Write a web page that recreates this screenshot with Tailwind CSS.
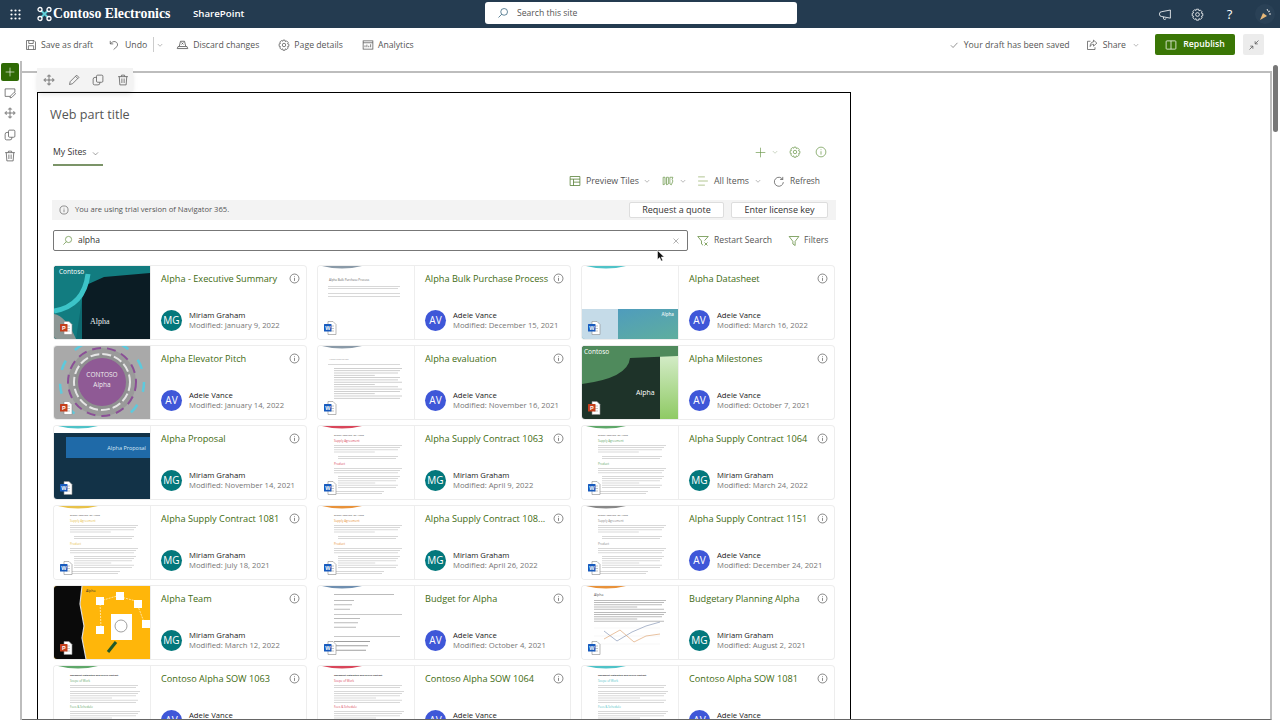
<!DOCTYPE html>
<html lang="en">
<head>
<meta charset="UTF-8">
<title>Contoso Electronics - SharePoint</title>
<script src="https://cdn.jsdelivr.net/npm/@tailwindcss/browser@4"></script>
</head>
<body class="h-[720px] w-[1280px] overflow-hidden bg-white font-['Open_Sans',sans-serif] text-[8.700px] text-[#444]">

<!-- icon sprite -->
<svg class="hidden">
  <defs>
    <symbol id="i-search" viewBox="0 0 16 16"><circle cx="9.500" cy="6.500" r="4.500"/><path d="M6.300 9.700 2 14"/></symbol>
    <symbol id="i-chev" viewBox="0 0 16 16"><path d="M3.500 6 8 10.500 12.500 6"/></symbol>
    <symbol id="i-save" viewBox="0 0 16 16"><path d="M2 2h10l2 2v10H2z"/><path d="M5 2v4h6V2M4.500 14V9h7v5"/></symbol>
    <symbol id="i-undo" viewBox="0 0 16 16"><path d="M3 2.500v4h4"/><path d="M3 6.500C5 4 7.500 3 9.500 3.500c3 .8 4.200 4 2.500 6.500L7.500 14"/></symbol>
    <symbol id="i-discard" viewBox="0 0 16 16"><path d="M1.500 13h13l-1-2.500h-1.500L10.500 4h-5L4 10.500H2.500z"/><path d="M4 10.500h8M6.800 5.500l2.400 2.400M9.200 5.500 6.800 7.900"/></symbol>
    <symbol id="i-gear" viewBox="0 0 16 16"><circle cx="8" cy="8" r="2.300"/><path d="M6.600 1.500h2.800l.4 2 1.800-.9 2 2-.9 1.800 1.800.5v2.800l-1.800.5.900 1.800-2 2-1.800-.9-.4 1.900H6.600l-.4-1.900-1.800.9-2-2 .9-1.800-1.800-.5V6.400l1.800-.5-.9-1.800 2-2 1.800.9z"/></symbol>
    <symbol id="i-chart" viewBox="0 0 16 16"><rect x="1.500" y="2.500" width="13" height="11"/><path d="M1.500 5h13M4 11V8.500M6.500 11V7.500M9 11V9M11.500 11V7"/></symbol>
    <symbol id="i-check" viewBox="0 0 16 16"><path d="M3 8.500 6.500 12 13.500 4.500"/></symbol>
    <symbol id="i-share" viewBox="0 0 16 16"><path d="M6 3H2v11h10v-3"/><path d="M14.500 5.500 10 1.500v2.300C7 4 5.500 6.500 5.500 10c1-2 2.500-3 4.500-3v2.500z"/></symbol>
    <symbol id="i-book" viewBox="0 0 16 16"><rect x="1.500" y="2.500" width="13" height="11" rx="1"/><path d="M8 2.500v11"/></symbol>
    <symbol id="i-collapse" viewBox="0 0 16 16"><path d="M14 2 9.500 6.500M9.500 3v3.500H13M2 14l4.500-4.500M3 9.500h3.500V13"/></symbol>
    <symbol id="i-megaphone" viewBox="0 0 16 16"><path d="M14 2.500v10L3.500 10.500a2.500 2.500 0 0 1 0-6z"/><path d="M5.500 11v1.500a1.500 1.500 0 0 0 3 .3"/></symbol>
    <symbol id="i-move" viewBox="0 0 16 16"><path d="M8 4v8M4 8h8M6 3l2-2 2 2zM6 13l2 2 2-2zM3 6 1 8l2 2zM13 6l2 2-2 2z"/></symbol>
    <symbol id="i-pencil" viewBox="0 0 16 16"><path d="M2 14l1-4L11.500 1.500l3 3L6 13z"/><path d="M10 3l3 3"/></symbol>
    <symbol id="i-copy" viewBox="0 0 16 16"><rect x="6" y="1.500" width="8.500" height="9.500" rx="1.500"/><path d="M6 4.500H4A2.500 2.500 0 0 0 1.500 7v5.500A2 2 0 0 0 3.500 14.500H8A2.500 2.500 0 0 0 10.500 12v-1"/></symbol>
    <symbol id="i-trash" viewBox="0 0 16 16"><path d="M1.500 3.500h13M5.500 3.500 6 1.500h4l.5 2M3 3.500l.8 11h8.400l.8-11M6.500 6v6M9.500 6v6"/></symbol>
    <symbol id="i-edit" viewBox="0 0 16 16"><path d="M8 12.500H1.500v-10h13V7"/><path d="M8 14.500l.6-2.400 5-5 1.800 1.800-5 5z"/></symbol>
    <symbol id="i-info" viewBox="0 0 16 16"><circle cx="8" cy="8" r="6.500"/><path d="M8 7v4.500M8 4.500v1"/></symbol>
    <symbol id="i-plus" viewBox="0 0 16 16"><path d="M8 1v14M1 8h14"/></symbol>
    <symbol id="i-table" viewBox="0 0 16 16"><path d="M1.500 2h13v12h-13zM1.500 5.500h13M6 5.500V14M6 9.500h8.500"/></symbol>
    <symbol id="i-board" viewBox="0 0 16 16"><path d="M1.500 3v10l2.500-1V3zM6 3v10l2.500-1V3zM10.500 3h4l-1 3 1 2-2 5-2-1z"/></symbol>
    <symbol id="i-list" viewBox="0 0 16 16"><path d="M1.500 2.500h9M1.500 8h13M1.500 13.500h9"/></symbol>
    <symbol id="i-refresh" viewBox="0 0 16 16"><path d="M13 2.500v3.500H9.500"/><path d="M13 6a6 6 0 1 0 .8 3.500"/></symbol>
    <symbol id="i-close" viewBox="0 0 16 16"><path d="M3 3l10 10M13 3 3 13"/></symbol>
    <symbol id="i-filter" viewBox="0 0 16 16"><path d="M1.500 2h13L9.500 8.500V14l-3-2V8.500z"/></symbol>
    <symbol id="i-filter-x" viewBox="0 0 16 16"><path d="M1 2h14L10 7.500M6 8 1 2M6 8v4l2 1.500"/><path d="M10 10l4 4M14 10l-4 4"/></symbol>
  </defs>
</svg>

<!-- suite bar -->
<header class="flex h-[28px] items-center bg-[#243b50] text-white">
  <div class="flex w-[485px] items-center whitespace-nowrap">
    <svg class="ml-[10px] h-[11px] w-[11px] fill-white" viewBox="0 0 11 11"><circle cx="1.500" cy="1.500" r="1.100"/><circle cx="5.500" cy="1.500" r="1.100"/><circle cx="9.500" cy="1.500" r="1.100"/><circle cx="1.500" cy="5.500" r="1.100"/><circle cx="5.500" cy="5.500" r="1.100"/><circle cx="9.500" cy="5.500" r="1.100"/><circle cx="1.500" cy="9.500" r="1.100"/><circle cx="5.500" cy="9.500" r="1.100"/><circle cx="9.500" cy="9.500" r="1.100"/></svg>
    <svg class="ml-[16px] h-[16px] w-[15px]" viewBox="0 0 15 16" fill="none" stroke-width="1.300">
      <path d="M4 4.500 11 11.500M11 4.500 4 11.500" stroke="#5fd0d8" stroke-width="2"/>
      <circle cx="3" cy="3.500" r="2" stroke="#fff"/><circle cx="12" cy="3.500" r="2" stroke="#fff"/><circle cx="3" cy="12.500" r="2" stroke="#fff"/><circle cx="12" cy="12.500" r="2" stroke="#fff"/>
    </svg>
    <span class="ml-[1px] w-[117px] font-['Liberation_Serif',serif] text-[13.800px] font-bold leading-none">Contoso Electronics</span>
    <span class="ml-[23px] text-[9.700px] font-semibold">SharePoint</span>
  </div>
  <div class="mb-[2px] flex h-[22px] w-[312px] items-center rounded-[3px] bg-white pl-[12px] text-[#555]">
    <svg class="h-[12px] w-[12px] fill-none stroke-[#2f5f7a]"><use href="#i-search"/></svg>
    <span class="ml-[8px] text-[8.600px]">Search this site</span>
  </div>
  <div class="ml-auto mr-[5px] flex items-center gap-[19px]">
    <svg class="h-[13px] w-[13px] fill-none stroke-white"><use href="#i-megaphone"/></svg>
    <svg class="h-[13px] w-[13px] fill-none stroke-white"><use href="#i-gear"/></svg>
    <span class="w-[13px] text-center text-[13px] leading-none">?</span>
    <div class="flex h-[20px] w-[20px] items-center justify-center rounded-full bg-[#2a4156]">
      <svg class="h-[14px] w-[14px]" viewBox="0 0 14 14"><path d="M2 13 5 6l4 3z" fill="#e8b878"/><path d="M9 2l1 2M12 4l-2 1M11 7h2" stroke="#dcdcdc" fill="none"/></svg>
    </div>
  </div>
</header>

<!-- command bar -->
<div class="flex h-[33px] items-center pl-[25px] text-[#555]">
  <svg class="h-[12px] w-[12px] fill-none stroke-[#555]"><use href="#i-save"/></svg>
  <span class="ml-[4px] pt-[2px]">Save as draft</span>
  <svg class="ml-[15px] h-[12px] w-[12px] fill-none stroke-[#555]"><use href="#i-undo"/></svg>
  <span class="ml-[5px] pt-[2px]">Undo</span>
  <span class="ml-[6px] h-[15px] w-px bg-[#ccc]"></span>
  <svg class="ml-[2px] h-[8px] w-[8px] fill-none stroke-[#777]"><use href="#i-chev"/></svg>
  <svg class="ml-[12px] h-[13px] w-[13px] fill-none stroke-[#555]"><use href="#i-discard"/></svg>
  <span class="ml-[4px] pt-[2px]">Discard changes</span>
  <svg class="ml-[19px] h-[12px] w-[12px] fill-none stroke-[#555]"><use href="#i-gear"/></svg>
  <span class="ml-[4px] pt-[2px]">Page details</span>
  <svg class="ml-[19px] h-[12px] w-[12px] fill-none stroke-[#555]"><use href="#i-chart"/></svg>
  <span class="ml-[4px] pt-[2px]">Analytics</span>

  <svg class="ml-auto h-[10px] w-[10px] fill-none stroke-[#555]"><use href="#i-check"/></svg>
  <span class="ml-[5px] pt-[2px]">Your draft has been saved</span>
  <svg class="ml-[16px] h-[12px] w-[12px] fill-none stroke-[#555]"><use href="#i-share"/></svg>
  <span class="ml-[5px] pt-[2px]">Share</span>
  <svg class="ml-[6px] h-[8px] w-[8px] fill-none stroke-[#777]"><use href="#i-chev"/></svg>
  <button class="ml-[15px] flex h-[21px] w-[80px] items-center justify-center gap-[6px] rounded-[2px] bg-[#3a7605] font-semibold text-white">
    <svg class="h-[12px] w-[12px] fill-none stroke-white"><use href="#i-book"/></svg>Republish
  </button>
  <button class="ml-[8px] mr-[16px] flex h-[21px] w-[21px] items-center justify-center rounded-[2px] bg-[#ececec]">
    <svg class="h-[12px] w-[12px] fill-none stroke-[#555]"><use href="#i-collapse"/></svg>
  </button>
</div>

<!-- page -->
<div class="relative flex h-[659px]">
  <!-- section toolbar -->
  <aside class="flex h-full w-[22px] flex-col items-center border-r-2 border-[#bdbdbd] pt-[2px]">
    <div class="flex h-[18px] w-[18px] items-center justify-center rounded-[2px] bg-[#2f6a05]">
      <svg class="h-[10px] w-[10px] fill-none stroke-white"><use href="#i-plus"/></svg>
    </div>
    <svg class="mt-[6px] h-[12px] w-[12px] fill-none stroke-[#555]"><use href="#i-edit"/></svg>
    <svg class="mt-[8px] h-[12px] w-[12px] fill-none stroke-[#555]"><use href="#i-move"/></svg>
    <svg class="mt-[10px] h-[12px] w-[12px] fill-none stroke-[#555]"><use href="#i-copy"/></svg>
    <svg class="mt-[9px] h-[12px] w-[12px] fill-none stroke-[#555]"><use href="#i-trash"/></svg>
  </aside>

  <!-- canvas section -->
  <main class="mt-[10px] h-[649px] w-[1250px] overflow-hidden border-t-2 border-r-2 border-b border-[#bdbdbd] border-b-[#666] pl-[15px] pt-[19px]">
    <section class="h-[700px] w-[814px] border border-black pl-[14px]">
      <h2 class="-ml-[2px] pt-[12px] text-[12.600px] leading-[20px] text-[#555]">Web part title</h2>

      <div class="mt-[20px] flex items-start pr-[23px]">
        <div class="ml-[1px] w-[50px] border-b-2 border-[#7b9468] pb-[5px]">
          <div class="flex h-[14px] items-center whitespace-nowrap pt-[2px] text-[#333]">My Sites
            <svg class="ml-[4px] h-[9px] w-[9px] fill-none stroke-[#555]"><use href="#i-chev"/></svg>
          </div>
        </div>
        <div class="ml-auto mt-[1px] flex items-center">
          <svg class="h-[11px] w-[11px] fill-none stroke-[#6f9a4f]"><use href="#i-plus"/></svg>
          <svg class="ml-[5px] h-[8px] w-[8px] fill-none stroke-[#9aae8a]"><use href="#i-chev"/></svg>
          <svg class="ml-[10px] h-[12px] w-[12px] fill-none stroke-[#6f9a4f]"><use href="#i-gear"/></svg>
          <svg class="ml-[14px] h-[12px] w-[12px] fill-none stroke-[#6f9a4f]"><use href="#i-info"/></svg>
        </div>
      </div>

      <div class="mt-[7px] flex h-[16px] items-center justify-end whitespace-nowrap pr-[30px] text-[8.800px] text-[#555]">
        <svg class="h-[12px] w-[12px] fill-none stroke-[#4f7a2c]"><use href="#i-table"/></svg>
        <span class="ml-[5px] pt-[2px]">Preview Tiles</span>
        <svg class="ml-[4px] h-[8px] w-[8px] fill-none stroke-[#777]"><use href="#i-chev"/></svg>
        <svg class="ml-[11px] h-[12px] w-[12px] fill-none stroke-[#6f9a4f]"><use href="#i-board"/></svg>
        <svg class="ml-[5px] h-[8px] w-[8px] fill-none stroke-[#777]"><use href="#i-chev"/></svg>
        <svg class="ml-[10px] h-[12px] w-[12px] fill-none stroke-[#9ab36f]"><use href="#i-list"/></svg>
        <span class="ml-[5px] pt-[2px]">All Items</span>
        <svg class="ml-[5px] h-[8px] w-[8px] fill-none stroke-[#777]"><use href="#i-chev"/></svg>
        <svg class="ml-[11px] h-[12px] w-[12px] fill-none stroke-[#555]"><use href="#i-refresh"/></svg>
        <span class="ml-[5px] pt-[1px] text-[8.400px]">Refresh</span>
      </div>

      <div class="mt-[11px] flex h-[20px] w-[784px] items-center bg-[#f3f3f3] pl-[7px] text-[7.600px] text-[#555]">
        <svg class="h-[10px] w-[10px] fill-none stroke-[#555]"><use href="#i-info"/></svg>
        <span class="ml-[6px]">You are using trial version of Navigator 365.</span>
        <button class="ml-auto h-[16px] w-[95px] rounded-[2px] border border-[#ddd] bg-white text-[9px] font-medium text-[#333]">Request a quote</button>
        <button class="ml-[7px] mr-[8px] h-[16px] w-[97px] rounded-[2px] border border-[#ddd] bg-white text-[9px] font-medium text-[#333]">Enter license key</button>
      </div>

      <div class="mt-[10px] flex h-[21px] items-center whitespace-nowrap">
        <div class="ml-[1px] flex h-[21px] w-[635px] items-center rounded-[2px] border border-[#777] pl-[8px] pr-[7px]">
          <svg class="h-[11px] w-[11px] fill-none stroke-[#5f8a3a]"><use href="#i-search"/></svg>
          <span class="ml-[5px] text-[8.500px] text-[#333]">alpha</span>
          <svg class="ml-auto h-[8px] w-[8px] fill-none stroke-[#666]"><use href="#i-close"/></svg>
        </div>
        <svg class="ml-[9px] h-[12px] w-[12px] fill-none stroke-[#5f8a3a]"><use href="#i-filter-x"/></svg>
        <span class="ml-[5px] text-[8.600px] text-[#555]">Restart Search</span>
        <svg class="ml-[16px] h-[12px] w-[12px] fill-none stroke-[#5f8a3a]"><use href="#i-filter"/></svg>
        <span class="ml-[4px] text-[8.600px] text-[#555]">Filters</span>
      </div>

      <div id="tiles" class="ml-[2px] mt-[15px] grid grid-cols-[252px_252px_252px] gap-x-[12px] gap-y-[7px]"></div>
    </section>
  </main>

  <!-- page scrollbar -->
  <div class="ml-[1px] mt-[4px] h-[67px] w-[5px] rounded-full bg-[#777]"></div>

  <!-- web part toolbar -->
  <div class="absolute left-[37px] top-[7px] flex h-[23px] w-[96px] items-center gap-[12.500px] bg-[#f3f3f3] pl-[6px] shadow-md">
    <svg class="h-[12px] w-[12px] fill-none stroke-[#555]"><use href="#i-move"/></svg>
    <svg class="h-[12px] w-[12px] fill-none stroke-[#555]"><use href="#i-pencil"/></svg>
    <svg class="h-[12px] w-[12px] fill-none stroke-[#555]"><use href="#i-copy"/></svg>
    <svg class="h-[12px] w-[12px] fill-none stroke-[#555]"><use href="#i-trash"/></svg>
  </div>

  <!-- mouse cursor -->
  <svg class="absolute left-[657px] top-[189px] h-[12px] w-[8px]" viewBox="0 0 8 12"><path d="M.5.5v9l2.200-2 1.500 3.500 1.500-.6-1.500-3.400h3z" fill="#111" stroke="#fff" stroke-width=".5"/></svg>
</div>

<script>
  // tiles: title, author, date, thumb kind, wave colour, file type
  const MG = ['Miriam Graham', 'MG', 'bg-[#03787c]'];
  const AV = ['Adele Vance', 'AV', 'bg-[#3f57d8]'];
  const tiles = [
    ['Alpha - Executive Summary', MG, 'January 9, 2022', 'exec', '', 'p'],
    ['Alpha Bulk Purchase Process', AV, 'December 15, 2021', 'bulk', '#8a9aa8', 'w'],
    ['Alpha Datasheet', AV, 'March 16, 2022', 'sheet', '#4fc3c8', 'w'],
    ['Alpha Elevator Pitch', AV, 'January 14, 2022', 'pitch', '', 'p'],
    ['Alpha evaluation', AV, 'November 16, 2021', 'eval', '#8a9aa8', 'w'],
    ['Alpha Milestones', AV, 'October 7, 2021', 'miles', '', 'p'],
    ['Alpha Proposal', MG, 'November 14, 2021', 'prop', '#4fc3c8', 'w'],
    ['Alpha Supply Contract 1063', MG, 'April 9, 2022', 'contract', '#d9465a', 'w'],
    ['Alpha Supply Contract 1064', MG, 'March 24, 2022', 'contract', '#5fa86a', 'w'],
    ['Alpha Supply Contract 1081', MG, 'July 18, 2021', 'contract', '#e8c24a', 'w'],
    ['Alpha Supply Contract 108...', MG, 'April 26, 2022', 'contract', '#e8923a', 'w'],
    ['Alpha Supply Contract 1151', AV, 'December 24, 2021', 'contract', '#888', 'w'],
    ['Alpha Team', MG, 'March 12, 2022', 'team', '', 'p'],
    ['Budget for Alpha', AV, 'October 4, 2021', 'budget', '#6f8fb0', 'w'],
    ['Budgetary Planning Alpha', MG, 'August 2, 2021', 'chart', '#e8923a', 'w'],
    ['Contoso Alpha SOW 1063', AV, '', 'sow', '#5fa86a', 'w'],
    ['Contoso Alpha SOW 1064', AV, '', 'sow', '#d9465a', 'w'],
    ['Contoso Alpha SOW 1081', AV, '', 'sow', '#4fc3c8', 'w'],
  ];

  function lines(y, rows, x = 10, w = 72, color = '#cfcfcf', step = 2.2) {
    let out = '';
    for (let i = 0; i < rows; i++) {
      const len = i % 4 === 3 ? w * 0.6 : w - (i % 3) * 2;
      out += `<rect x="${x}" y="${y + i * step}" width="${len}" height=".8" fill="${color}"/>`;
    }
    return out;
  }
  const wave = c => `<path d="M4 0Q24 5 44 0z" fill="${c}"/>`;

  function thumb(kind, c, id) {
    switch (kind) {
      case 'exec': return `<rect width="96" height="73" fill="#0b1c24"/><rect width="28" height="73" fill="#0e6a70"/><path d="M0 0h96v7L50 11 30 20 22 73H0z" fill="#127c80"/><path d="M0 45Q30 40 34 8" fill="none" stroke="#3cc4c8" stroke-width="5"/><path d="M0 48Q12 50 22 73H0z" fill="#8c9694"/><text x="36" y="58" font-size="8" fill="#e8f0f0" font-family="Liberation Serif">Alpha</text><text x="5" y="8" font-size="6.500" fill="#fff">Contoso</text>`;
      case 'pitch': return `<rect width="96" height="73" fill="#a9a9a9"/><circle cx="48" cy="36" r="42" fill="none" stroke="#5ec9dc" stroke-width="2.500" stroke-dasharray="10 14"/><circle cx="48" cy="36" r="34" fill="#9a9a9a" stroke="#8a4f96" stroke-width="2" stroke-dasharray="9 6"/><circle cx="48" cy="36" r="28" fill="#8f9090" stroke="#e6e6e6" stroke-width="2" stroke-dasharray="9 3"/><circle cx="48" cy="36" r="24" fill="#8f5a95"/><text x="48" y="31" font-size="6.500" fill="#eee" text-anchor="middle">CONTOSO</text><text x="48" y="41" font-size="6.500" fill="#eee" text-anchor="middle">Alpha</text>`;
      case 'sheet': return `<defs><linearGradient id="g${id}" x1="0" y1="0" x2="1" y2="1"><stop offset="0" stop-color="#4b98c4"/><stop offset="1" stop-color="#5fae9e"/></linearGradient></defs><rect width="96" height="73" fill="#fff"/>${wave(c)}<rect y="43" width="96" height="30" fill="url(#g${id})"/><rect y="43" width="36" height="30" fill="#c5dbe8"/><text x="92" y="50" font-size="4.500" fill="#e8f4f4" text-anchor="end" font-weight="600">Alpha</text>`;
      case 'miles': return `<defs><linearGradient id="g${id}" x1="0" y1="0" x2="0" y2="1"><stop offset="0" stop-color="#d4ecc8"/><stop offset="1" stop-color="#8fca64"/></linearGradient></defs><rect width="96" height="73" fill="#1e3329"/><rect x="78" y="9" width="18" height="64" fill="url(#g${id})"/><path d="M0 0h96v10L48 12Q46 32 0 38z" fill="#4f8a5c"/><text x="2" y="8" font-size="6.500" fill="#fff">Contoso</text><text x="54" y="49" font-size="7" fill="#fff">Alpha</text>`;
      case 'prop': return `<rect width="96" height="73" fill="#fff"/>${wave(c)}<rect y="7" width="96" height="66" fill="#123247"/><rect x="12" y="11" width="84" height="21" fill="#1f6aa8"/><text x="92" y="24" font-size="5.500" fill="#d8e8f4" text-anchor="end">Alpha Proposal</text>`;
      case 'team': return `<rect width="96" height="73" fill="#ffb60a"/><path d="M0 0h28l-2 18 4 22-2 12 4 21H0z" fill="#0a0a0a"/><path d="M28 0l-2 18 4 22-2 12 4 21" fill="none" stroke="#ddd" stroke-width="1.200"/><path d="M46 15 63 10 82 15 90 36M46 15 47 43" stroke="#fff" stroke-width=".6" stroke-dasharray="2 1" fill="none"/><rect x="57" y="28" width="21" height="26" fill="#fff"/><circle cx="67" cy="40" r="6" fill="none" stroke="#888" stroke-width=".8"/><rect x="42" y="11" width="8" height="8" fill="#fff"/><rect x="62" y="6" width="8" height="8" fill="#fff"/><rect x="80" y="14" width="8" height="8" fill="#fff"/><rect x="42" y="40" width="8" height="8" fill="#fff"/><rect x="88" y="34" width="8" height="8" fill="#fff"/><path d="M54 66 62 56" stroke="#1f5a2a" stroke-width="3"/><text x="32" y="6" font-size="3.500" fill="#333">Alpha</text>`;
      case 'bulk': return `<rect width="96" height="73" fill="#fff"/>${wave(c)}<text x="11" y="15" font-size="3" fill="#666">Alpha Bulk Purchase Process</text>${lines(20, 2)}${lines(27, 1)}${lines(30, 1)}`;
      case 'eval': return `<rect width="96" height="73" fill="#fff"/>${wave(c)}<text x="11" y="14" font-size="2.500" fill="#999">Alpha evaluation</text>${lines(18, 1)}${lines(22, 14, 16, 68, '#c4c4c4', 2.300)}`;
      case 'contract': return `<rect width="96" height="73" fill="#fff"/>${wave(c)}<text x="16" y="10" font-size="2.500" fill="#444">Supply Contract for Alpha</text><text x="16" y="16" font-size="3" fill="${c}">Supply Agreement</text>${lines(19, 4, 16, 68)}${lines(30, 2, 20, 60)}<text x="16" y="39" font-size="3" fill="${c}">Product</text>${lines(42, 3, 16, 68)}${lines(50, 6, 20, 62)}${lines(65, 2, 16, 50)}`;
      case 'sow': return `<rect width="96" height="73" fill="#fff"/>${wave(c)}<text x="16" y="10" font-size="2.200" fill="#333" font-weight="700">Equipment Installation and Service Contract</text><text x="16" y="16" font-size="3" fill="${c}">Scope of Work</text>${lines(19, 2, 16, 68)}${lines(25, 6, 16, 70)}<text x="16" y="42" font-size="3" fill="${c}">Fees &amp; Schedule</text>${lines(45, 12, 16, 70)}`;
      case 'budget': return `<rect width="96" height="73" fill="#fff"/>${wave(c)}${lines(8, 1, 16, 60, '#aaa')}${lines(14, 3, 16, 20, '#aaa', 4.400)}${lines(28, 1, 16, 68, '#bbb')}${lines(32, 3, 16, 26, '#aaa', 4.400)}${lines(50, 1, 16, 66, '#bbb')}${lines(55, 3, 16, 36, '#888', 4.400)}`;
      case 'chart': return `<rect width="96" height="73" fill="#fff"/>${wave(c)}<text x="12" y="10" font-size="3.500" fill="#555">Alpha</text>${lines(14, 5, 12, 72, '#aaa')}${lines(26, 5, 12, 72, '#aaa')}<path d="M12 42h66M12 50h66M12 58h66" stroke="#eee" stroke-width=".5"/><path d="M22 45 35 55 50 46 64 40 78 36" fill="none" stroke="#8a9ab8" stroke-width=".7"/><path d="M22 53 38 44 52 56 64 50 78 48" fill="none" stroke="#e0a878" stroke-width=".7"/>`;
    }
  }

  function fileIcon(type) {
    const colour = type === 'w' ? '#185abd' : '#c43e1c';
    const letter = type === 'w' ? 'W' : 'P';
    return `<g transform="translate(6 55)"><path d="M4 .5h5l3 3v10H4z" fill="#fff" stroke="#8a8a8a" stroke-width=".6"/><path d="M6 5h4M6 7.500h4M6 10h4" stroke="#aaa" stroke-width=".7"/><rect y="3" width="7.500" height="7.500" rx=".6" fill="${colour}"/><text x="3.750" y="9" font-size="5.500" font-weight="700" fill="#fff" text-anchor="middle" font-family="Liberation Sans">${letter}</text></g>`;
  }

  document.getElementById('tiles').innerHTML = tiles.map(([title, person, date, kind, colour, type], i) => `
    <article class="flex h-[73px] overflow-hidden rounded-[3px] shadow-[0_0_0_1px_#ededed]">
      <svg class="h-[73px] w-[97px] shrink-0 border-r border-[#eee]" viewBox="0 0 96 73">${thumb(kind, colour, i)}${fileIcon(type)}</svg>
      <div class="min-w-0 flex-1 pl-[10px]">
        <div class="flex items-start pr-[6px] pt-[5px]">
          <h3 class="min-w-0 flex-1 whitespace-nowrap text-[9.200px] font-medium leading-[15px] text-[#3f6b12]">${title}</h3>
          <svg class="mt-[2px] h-[11px] w-[11px] shrink-0 fill-none stroke-[#555]"><use href="#i-info"/></svg>
        </div>
        <div class="mt-[24px] flex items-center whitespace-nowrap">
          <div class="flex h-[21px] w-[21px] items-center justify-center rounded-full ${person[2]} text-[10px] text-white">${person[1]}</div>
          <div class="ml-[7px] text-[7.700px] leading-[9.500px]">
            <p class="font-medium text-[#222]">${person[0]}</p>
            <p class="text-[#777]">Modified: ${date}</p>
          </div>
        </div>
      </div>
    </article>`).join('');
</script>
</body>
</html>
